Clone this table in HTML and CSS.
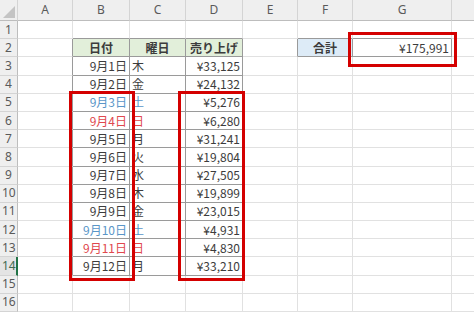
FILE: index.html
```html
<!DOCTYPE html>
<html lang="ja">
<head>
<meta charset="utf-8">
<link rel="stylesheet" href="styles.css">
</head>
<body>
<div class="wrap">
<table class="sheet">
<colgroup>
<col class="c-rh"><col class="c-a"><col class="c-b"><col class="c-c"><col class="c-d"><col class="c-e"><col class="c-f"><col class="c-g"><col class="c-h">
</colgroup>
<tr class="hdr">
<th class="corner"><span class="tri"></span></th><th>A</th><th>B</th><th>C</th><th>D</th><th>E</th><th>F</th><th>G</th><th></th>
</tr>
<tr><th class="rh">1</th><td></td><td class="tt"></td><td class="tt"></td><td class="tt"></td><td></td><td class="tt"></td><td class="tt"></td><td></td></tr>
<tr><th class="rh">2</th><td class="tl"></td><td class="t th-g">日付</td><td class="t th-g">曜日</td><td class="t th-g">売り上げ</td><td class="tl"></td><td class="t th-b">合計</td><td class="t r">¥175,991</td><td></td></tr>
<tr><th class="rh">3</th><td class="tl"></td><td class="t r">9月1日</td><td class="t">木</td><td class="t r">¥33,125</td><td></td><td></td><td></td><td></td></tr>
<tr><th class="rh">4</th><td class="tl"></td><td class="t r">9月2日</td><td class="t">金</td><td class="t r">¥24,132</td><td></td><td></td><td></td><td></td></tr>
<tr><th class="rh">5</th><td class="tl"></td><td class="t r sat">9月3日</td><td class="t sat">土</td><td class="t r">¥5,276</td><td></td><td></td><td></td><td></td></tr>
<tr><th class="rh">6</th><td class="tl"></td><td class="t r sun">9月4日</td><td class="t sun">日</td><td class="t r">¥6,280</td><td></td><td></td><td></td><td></td></tr>
<tr><th class="rh">7</th><td class="tl"></td><td class="t r">9月5日</td><td class="t">月</td><td class="t r">¥31,241</td><td></td><td></td><td></td><td></td></tr>
<tr><th class="rh">8</th><td class="tl"></td><td class="t r">9月6日</td><td class="t">火</td><td class="t r">¥19,804</td><td></td><td></td><td></td><td></td></tr>
<tr><th class="rh">9</th><td class="tl"></td><td class="t r">9月7日</td><td class="t">水</td><td class="t r">¥27,505</td><td></td><td></td><td></td><td></td></tr>
<tr><th class="rh">10</th><td class="tl"></td><td class="t r">9月8日</td><td class="t">木</td><td class="t r">¥19,899</td><td></td><td></td><td></td><td></td></tr>
<tr><th class="rh">11</th><td class="tl"></td><td class="t r">9月9日</td><td class="t">金</td><td class="t r">¥23,015</td><td></td><td></td><td></td><td></td></tr>
<tr><th class="rh">12</th><td class="tl"></td><td class="t r sat">9月10日</td><td class="t sat">土</td><td class="t r">¥4,931</td><td></td><td></td><td></td><td></td></tr>
<tr><th class="rh">13</th><td class="tl"></td><td class="t r sun">9月11日</td><td class="t sun">日</td><td class="t r">¥4,830</td><td></td><td></td><td></td><td></td></tr>
<tr><th class="rh active">14</th><td class="tl"></td><td class="t r">9月12日</td><td class="t">月</td><td class="t r">¥33,210</td><td></td><td></td><td></td><td></td></tr>
<tr><th class="rh">15</th><td></td><td></td><td></td><td></td><td></td><td></td><td></td><td></td></tr>
<tr><th class="rh">16</th><td></td><td></td><td></td><td></td><td></td><td></td><td></td><td></td></tr>
</table>
<div class="mark mark-b"></div>
<div class="mark mark-d"></div>
<div class="mark mark-g"></div>
</div>
</body>
</html>
```

FILE: styles.css
```css
html, body {
  margin: 0;
  padding: 0;
  background: #fff;
}
.wrap {
  position: relative;
  width: 474px;
  height: 312px;
  overflow: hidden;
}
.sheet {
  border-collapse: separate;
  border-spacing: 0;
  table-layout: fixed;
  width: 500px;
  font-family: "Noto Sans CJK JP", "Noto Sans", sans-serif;
  font-size: 12px;
  color: #3c3c3c;
}
.c-rh { width: 18px; }
.c-a { width: 55px; }
.c-b { width: 57px; }
.c-c { width: 56px; }
.c-d { width: 57px; }
.c-e { width: 55px; }
.c-f { width: 55px; }
.c-g { width: 99px; }
.c-h { width: 48px; }

.sheet tr { height: 18.2px; }
.sheet tr.hdr { height: 21px; }

.sheet th, .sheet td {
  box-sizing: border-box;
  padding: 0 2px;
  border-right: 1px solid #e1e1e1;
  border-bottom: 1px solid #e1e1e1;
  white-space: nowrap;
  overflow: hidden;
  line-height: 16px;
}
.hdr th {
  background: #efefef;
  font-family: "Noto Sans", sans-serif;
  font-weight: normal;
  font-size: 12px;
  color: #5a5a5a;
  text-align: center;
  border-right: 1px solid #d4d4d4;
  border-bottom: 1px solid #bdbdbd;
}
.corner {
  position: relative;
}
.tri {
  position: absolute;
  right: 2px;
  bottom: 2px;
  width: 0;
  height: 0;
  border-left: 12px solid transparent;
  border-bottom: 12px solid #c4c4c4;
}
.rh {
  background: #efefef;
  font-family: "Noto Sans", sans-serif;
  font-weight: normal;
  font-size: 12px;
  color: #5a5a5a;
  text-align: center;
  padding: 0;
  border-right: 1px solid #bdbdbd !important;
  border-bottom: 1px solid #d4d4d4 !important;
}
.rh.active {
  background: #e4e4e4;
  color: #3f6b52;
  border-right: 2px solid #217346 !important;
}
.tt { border-bottom-color: #9a9a9a !important; }
.tl { border-right-color: #9a9a9a !important; }
.t {
  border-right-color: #9a9a9a !important;
  border-bottom-color: #9a9a9a !important;
}
.r { text-align: right; }
.th-g {
  background: #e2efda;
  font-weight: bold;
  text-align: center;
}
.th-b {
  background: #ddebf7;
  font-weight: bold;
  text-align: center;
}
.sat { color: #5a96c8; }
.sun { color: #e0484e; }

.mark {
  position: absolute;
  box-sizing: border-box;
  border: 3px solid #d40000;
}
.mark-b { left: 69px; top: 91px; width: 66px; height: 190px; }
.mark-d { left: 178px; top: 91px; width: 67px; height: 190px; }
.mark-g { left: 348px; top: 32px; width: 109px; height: 35px; }
```
